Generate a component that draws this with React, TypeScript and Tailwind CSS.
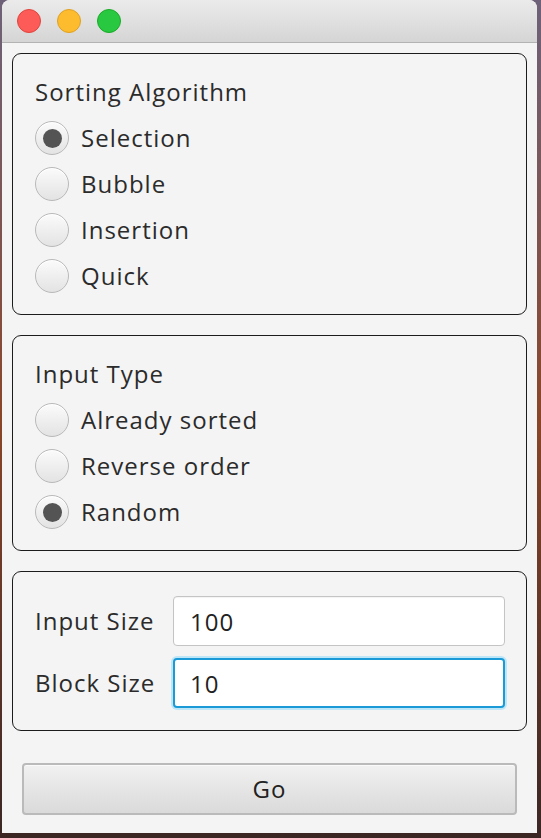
import React, { useState } from "react";

const font = { fontFamily: "'Open Sans', 'Noto Sans', sans-serif" };

const Radio = ({ label, checked, onClick }: { label: string; checked: boolean; onClick: () => void }) => (
  <button onClick={onClick} className="flex items-center h-[46px] text-left">
    <span className="w-[34px] h-[34px] rounded-full border border-[#b9b9b9] bg-gradient-to-b from-[#fbfbfb] to-[#e3e3e3] shadow-[inset_0_1px_0_#ffffff] flex items-center justify-center shrink-0">
      {checked && <span className="w-[19px] h-[19px] rounded-full bg-[#545454]" />}
    </span>
    <span className="ml-[12px] text-[24px] tracking-[1px] text-[#2b2b2b] leading-none">{label}</span>
  </button>
);

const Group = ({
  title,
  options,
  value,
  onChange,
  bottom,
}: {
  title: string;
  options: string[];
  value: string;
  onChange: (v: string) => void;
  bottom: string;
}) => (
  <div className={`border border-[#1c1c1c] rounded-[9px] pt-[23px] px-[22px] ${bottom}`}>
    <div className="h-[30px] flex items-center text-[24px] tracking-[1px] text-[#2b2b2b] leading-none">{title}</div>
    <div className="flex flex-col mt-[8px]">
      {options.map((o) => (
        <Radio key={o} label={o} checked={value === o} onClick={() => onChange(o)} />
      ))}
    </div>
  </div>
);

export default function App() {
  const [algo, setAlgo] = useState("Selection");
  const [input, setInput] = useState("Random");
  const [inputSize, setInputSize] = useState("100");
  const [blockSize, setBlockSize] = useState("10");

  return (
    <div className="w-[541px] h-[838px] overflow-hidden bg-gradient-to-b from-[#6d6179] via-[#8a4527] to-[#3b2624]" style={font}>
      <div className="ml-[2px] w-[535px] h-[833px] rounded-t-[8px] bg-[#f4f4f4] flex flex-col overflow-hidden">
        <div className="h-[43px] shrink-0 bg-gradient-to-b from-[#ebebeb] to-[#d5d5d5] border-b border-[#b3b3b3] flex items-center pl-[15px] gap-[16px]">
          <span className="w-[24px] h-[24px] rounded-full bg-[#fc5b57] border border-[#e0443e]" />
          <span className="w-[24px] h-[24px] rounded-full bg-[#fdbc2e] border border-[#dea123]" />
          <span className="w-[24px] h-[24px] rounded-full bg-[#28c840] border border-[#1aab29]" />
        </div>

        <div className="px-[10px] pt-[10px] flex flex-col gap-[20px]">
          <Group
            title="Sorting Algorithm"
            options={["Selection", "Bubble", "Insertion", "Quick"]}
            value={algo}
            onChange={setAlgo}
            bottom="pb-[15px]"
          />
          <Group
            title="Input Type"
            options={["Already sorted", "Reverse order", "Random"]}
            value={input}
            onChange={setInput}
            bottom="pb-[15px]"
          />

          <div className="border border-[#1c1c1c] rounded-[9px] pt-[24px] pb-[22px] pl-[22px] pr-[21px] flex flex-col gap-[12px]">
            <div className="flex items-center">
              <span className="w-[138px] shrink-0 whitespace-nowrap text-[24px] tracking-[1px] text-[#2b2b2b]">Input Size</span>
              <input
                value={inputSize}
                onChange={(e) => setInputSize(e.target.value)}
                className="flex-1 min-w-0 h-[50px] bg-white border border-[#c4c4c4] rounded-[4px] px-[16px] text-[24px] tracking-[1px] text-[#222] outline-none shadow-[inset_0_1px_1px_rgba(0,0,0,0.05)]"
              />
            </div>
            <div className="flex items-center">
              <span className="w-[138px] shrink-0 whitespace-nowrap text-[24px] tracking-[1px] text-[#2b2b2b]">Block Size</span>
              <input
                value={blockSize}
                onChange={(e) => setBlockSize(e.target.value)}
                className="flex-1 min-w-0 h-[50px] bg-white border-2 border-[#1a9bd7] rounded-[4px] px-[15px] text-[24px] tracking-[1px] text-[#222] outline-none shadow-[0_0_0_2px_#bfe6f7]"
              />
            </div>
          </div>
        </div>

        <div className="px-[20px] pt-[32px]">
          <button className="w-full h-[52px] rounded-[4px] border-2 border-[#bababa] bg-gradient-to-b from-[#f1f1f1] to-[#dadada] text-[24px] tracking-[1px] text-[#222] shadow-[inset_0_1px_0_#fafafa]">
            Go
          </button>
        </div>
      </div>
    </div>
  );
}
